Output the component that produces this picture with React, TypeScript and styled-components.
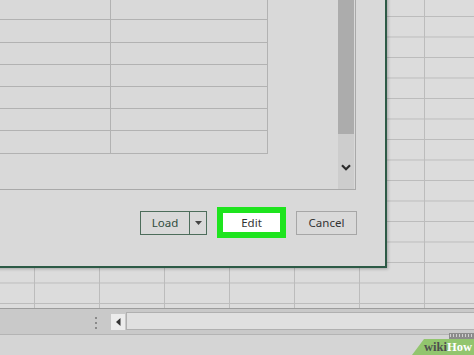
import React from "react";
import styled, { createGlobalStyle } from "styled-components";

const GlobalStyle = createGlobalStyle`
  html, body { margin: 0; padding: 0; background: #d9d9d9; }
  body { font-family: "Noto Sans", "Open Sans", Arial, sans-serif; }
  * { box-sizing: border-box; }
`;

const Screen = styled.div`
  position: relative;
  width: 474px;
  height: 355px;
  overflow: hidden;
  display: flex;
  flex-direction: column;
  background: #d8d8d8;
`;

const Sheet = styled.div`
  flex: 0 0 309px;
  background-color: #dcdcdc;
  background-image:
    linear-gradient(to right, #bcbcbc 1px, transparent 1px),
    linear-gradient(to bottom, #bcbcbc 1px, transparent 1px);
  background-size: 65px 20.5px;
  background-position: 34px 16px;
  border-bottom: 1px solid #9c9c9c;
`;

const ScrollBand = styled.div`
  flex: 0 0 26px;
  display: flex;
  align-items: flex-start;
  padding: 3px 0 0 95px;
  background: #c9c9c9;
  border-bottom: 1px solid #b4b4b4;
`;

const Dots = styled.div`
  display: flex;
  flex-direction: column;
  gap: 3px;
  margin: 5px 14px 0 0;
  span {
    display: block;
    width: 2px;
    height: 2px;
    background: #8a8a8a;
  }
`;

const ArrowBtn = styled.div`
  width: 14px;
  height: 16px;
  margin-top: 2px;
  background: #ececec;
  display: flex;
  align-items: center;
  justify-content: center;
`;

const Track = styled.div`
  flex: 1;
  height: 18px;
  margin-left: 1px;
  background: #e0e0e0;
  border: 1px solid #b0b0b0;
  border-right: none;
`;

const StatusBar = styled.div`
  flex: 1;
  background: #d5d5d5;
`;

const Dialog = styled.div`
  position: absolute;
  left: -20px;
  top: -24px;
  width: 407px;
  height: 292px;
  background: #d9d9d9;
  border-right: 2px solid #2d5a46;
  border-bottom: 2px solid #2d5a46;
  box-shadow: 1px 1px 3px rgba(0, 0, 0, 0.25);
  padding: 0 28px 0 10px;
  display: flex;
  flex-direction: column;
`;

const Frame = styled.div`
  height: 214px;
  margin-right: 1px;
  border-right: 1px solid #a9a9a9;
  border-bottom: 1px solid #a9a9a9;
  display: flex;
  justify-content: space-between;
`;

const Table = styled.div`
  display: grid;
  grid-template-columns: 121px 157px;
  align-self: flex-start;
`;

const Cell = styled.div`
  height: 22.2px;
  border-bottom: 1px solid #b2b2b2;
  border-right: 1px solid #b2b2b2;
`;

const ScrollBar = styled.div`
  width: 16px;
  margin-right: 1px;
  display: flex;
  flex-direction: column;
  background: #cdcdcd;
`;

const Thumb = styled.div`
  height: 158px;
  background: #acacac;
`;

const ScrollSpacer = styled.div`
  flex: 1;
`;

const ChevronBox = styled.div`
  height: 44px;
  display: flex;
  align-items: center;
  justify-content: center;
`;

const ButtonRow = styled.div`
  margin-top: 17px;
  height: 31px;
  display: flex;
  justify-content: flex-end;
  align-items: center;
  gap: 10px;
`;

const Split = styled.div`
  display: flex;
  height: 24px;
`;

const BaseButton = styled.div`
  height: 24px;
  display: flex;
  align-items: center;
  justify-content: center;
  font-size: 11.5px;
  color: #333;
  background: #d9d9d9;
`;

const LoadBtn = styled(BaseButton)`
  width: 50px;
  border: 1px solid #4d6d5b;
  color: #2f4c3d;
`;

const DropBtn = styled(BaseButton)`
  width: 17px;
  border: 1px solid #4d6d5b;
  border-left: none;
`;

const EditBtn = styled(BaseButton)`
  width: 69px;
  height: 31px;
  border: 6px solid #1ee41e;
  background: #ffffff;
  color: #333;
`;

const CancelBtn = styled(BaseButton)`
  width: 61px;
  border: 1px solid #a6a6a6;
`;

const Logo = styled.div`
  position: absolute;
  right: 0;
  bottom: 0;
  width: 62px;
  height: 22px;
`;

const LogoTab = styled.div`
  position: absolute;
  right: 0;
  top: 0;
  width: 25px;
  height: 7px;
  background: #8c8c8c;
  background-image: linear-gradient(to right, #d0d0d0 1px, transparent 1px);
  background-size: 3px 3px;
  background-position: 10px 1px;
  background-repeat: repeat-x;
`;

const LogoBand = styled.div`
  position: absolute;
  left: 0;
  right: 0;
  bottom: 0;
  height: 16px;
  background: #92c56e;
  clip-path: polygon(12px 0, 100% 0, 100% 100%, 0 100%);
  display: flex;
  align-items: center;
  padding-left: 12px;
  font-family: "Liberation Serif", "DejaVu Serif", serif;
  font-weight: bold;
  font-size: 12.5px;
  line-height: 1;
  white-space: nowrap;
`;

const Wiki = styled.span`
  color: #4e4e4e;
`;

const How = styled.span`
  color: #ffffff;
`;

export default function App() {
  const rows = Array.from({ length: 8 });
  return (
    <>
      <GlobalStyle />
      <Screen>
        <Sheet />
        <ScrollBand>
          <Dots>
            <span />
            <span />
            <span />
          </Dots>
          <ArrowBtn>
            <svg width="5" height="8" viewBox="0 0 5 8">
              <path d="M4.5 0 L0 4 L4.5 8 Z" fill="#333" />
            </svg>
          </ArrowBtn>
          <Track />
        </ScrollBand>
        <StatusBar />

        <Dialog>
          <Frame>
            <Table>
              {rows.map((_, i) => (
                <React.Fragment key={i}>
                  <Cell />
                  <Cell />
                </React.Fragment>
              ))}
            </Table>
            <ScrollBar>
              <Thumb />
              <ScrollSpacer />
              <ChevronBox>
                <svg width="10" height="7" viewBox="0 0 10 7">
                  <path d="M1 1.2 L5 5.2 L9 1.2" fill="none" stroke="#2a2a2a" strokeWidth="2.2" />
                </svg>
              </ChevronBox>
            </ScrollBar>
          </Frame>
          <ButtonRow>
            <Split>
              <LoadBtn>Load</LoadBtn>
              <DropBtn>
                <svg width="7" height="4" viewBox="0 0 7 4">
                  <path d="M0 0 L7 0 L3.5 4 Z" fill="#444" />
                </svg>
              </DropBtn>
            </Split>
            <EditBtn>Edit</EditBtn>
            <CancelBtn>Cancel</CancelBtn>
          </ButtonRow>
        </Dialog>

        <Logo>
          <LogoTab />
          <LogoBand>
            <Wiki>wiki</Wiki>
            <How>How</How>
          </LogoBand>
        </Logo>
      </Screen>
    </>
  );
}
